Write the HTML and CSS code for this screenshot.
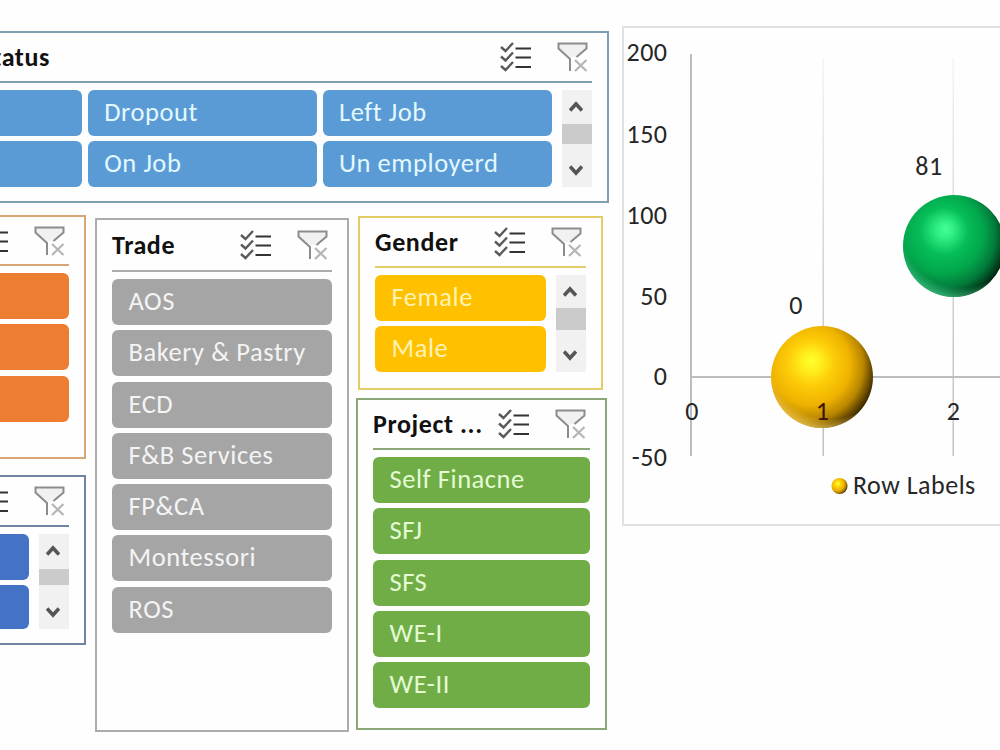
FILE: index.html
```html
<!DOCTYPE html>
<html lang="en">
<head>
  <meta charset="UTF-8" />
  <meta name="viewport" content="width=device-width, initial-scale=1.0">
  <title>Dashboard</title>
  <link rel="stylesheet" href="styles.css">
</head>
<body>
  <!-- shared icons -->
  <svg class="defs" width="0" height="0">
    <symbol id="icon-multi" viewBox="0 0 31 30">
      <path d="M1 5l4.5 4L13 1M1 14.5l4.5 4L13 10.500M1 24l4.500 4L13 20" fill="none" stroke="#5a5a5a" stroke-width="2.4"/>
      <path d="M15.500 6.500H31M15.500 15.500H31M15.500 25H31" stroke="#333" stroke-width="2.200"/>
    </symbol>
    <symbol id="icon-clear" viewBox="0 0 31 31">
      <path d="M1.500 1.500H29.500V6.500L20 15L13 15L1.500 6.500Z" fill="#f1f1f1"/>
      <path d="M13 29V17L1.500 6.500V1.500H29.500V6.500L19.500 15" fill="none" stroke="#8c8c8c" stroke-width="2"/>
      <path d="M18 18L29.500 29M29.500 18L18 29" stroke="#b8b4b4" stroke-width="2.200"/>
    </symbol>
    <symbol id="icon-up" viewBox="0 0 14 11">
      <path d="M1 9.500L7 3L13 9.500" fill="none" stroke="#555" stroke-width="3.600"/>
    </symbol>
    <symbol id="icon-down" viewBox="0 0 14 11">
      <path d="M1 1.500L7 8L13 1.500" fill="none" stroke="#555" stroke-width="3.600"/>
    </symbol>
  </svg>

  <div class="dashboard">
    <div class="slicers">
      <div class="slicer status">
        <div class="slicer-header">
          <h3>Status</h3>
          <svg class="multi"><use href="#icon-multi"/></svg>
          <svg class="clear"><use href="#icon-clear"/></svg>
        </div>
        <div class="slicer-body">
          <div class="items three">
            <button></button>
            <button>Dropout</button>
            <button>Left Job</button>
            <button></button>
            <button>On Job</button>
            <button>Un employerd</button>
          </div>
          <div class="scrollbar">
            <svg><use href="#icon-up"/></svg>
            <div class="thumb"></div>
            <svg><use href="#icon-down"/></svg>
          </div>
        </div>
      </div>

      <div class="columns">
        <div class="column column-left">
          <div class="slicer orange">
            <div class="slicer-header">
              <svg class="multi"><use href="#icon-multi"/></svg>
              <svg class="clear"><use href="#icon-clear"/></svg>
            </div>
            <div class="slicer-body">
              <div class="items">
                <button></button>
                <button></button>
                <button></button>
              </div>
            </div>
          </div>
          <div class="slicer blue">
            <div class="slicer-header">
              <svg class="multi"><use href="#icon-multi"/></svg>
              <svg class="clear"><use href="#icon-clear"/></svg>
            </div>
            <div class="slicer-body">
              <div class="items">
                <button></button>
                <button></button>
              </div>
              <div class="scrollbar">
                <svg><use href="#icon-up"/></svg>
                <div class="thumb"></div>
                <svg><use href="#icon-down"/></svg>
              </div>
            </div>
          </div>
        </div>

        <div class="column column-trade">
          <div class="slicer trade">
            <div class="slicer-header">
              <h3>Trade</h3>
              <svg class="multi"><use href="#icon-multi"/></svg>
              <svg class="clear"><use href="#icon-clear"/></svg>
            </div>
            <div class="slicer-body">
              <div class="items">
                <button>AOS</button>
                <button>Bakery &amp; Pastry</button>
                <button>ECD</button>
                <button>F&amp;B Services</button>
                <button>FP&amp;CA</button>
                <button>Montessori</button>
                <button>ROS</button>
              </div>
            </div>
          </div>
        </div>

        <div class="column column-right">
          <div class="slicer gender">
            <div class="slicer-header">
              <h3>Gender</h3>
              <svg class="multi"><use href="#icon-multi"/></svg>
              <svg class="clear"><use href="#icon-clear"/></svg>
            </div>
            <div class="slicer-body">
              <div class="items">
                <button>Female</button>
                <button>Male</button>
              </div>
              <div class="scrollbar">
                <svg><use href="#icon-up"/></svg>
                <div class="thumb"></div>
                <svg><use href="#icon-down"/></svg>
              </div>
            </div>
          </div>
          <div class="slicer project">
            <div class="slicer-header">
              <h3>Project ...</h3>
              <svg class="multi"><use href="#icon-multi"/></svg>
              <svg class="clear"><use href="#icon-clear"/></svg>
            </div>
            <div class="slicer-body">
              <div class="items">
                <button>Self Finacne</button>
                <button>SFJ</button>
                <button>SFS</button>
                <button>WE-I</button>
                <button>WE-II</button>
              </div>
            </div>
          </div>
        </div>
      </div>
    </div>

    <div class="chart">
      <svg width="440" height="496" viewBox="0 0 440 496">
        <defs>
          <linearGradient id="grid-fade" x1="0" y1="30" x2="0" y2="428" gradientUnits="userSpaceOnUse">
            <stop offset="0" stop-color="#f4f4f4"/>
            <stop offset="0.5" stop-color="#d4d4d6"/>
            <stop offset="1" stop-color="#bfc1c4"/>
          </linearGradient>
          <radialGradient id="gold" cx="0.37" cy="0.4" r="0.66" fx="0.4" fy="0.34">
            <stop offset="0" stop-color="#ffff30"/>
            <stop offset="0.12" stop-color="#fff21e"/>
            <stop offset="0.35" stop-color="#fdcb08"/>
            <stop offset="0.6" stop-color="#eeb200"/>
            <stop offset="0.8" stop-color="#b98600"/>
            <stop offset="1" stop-color="#3a2800"/>
          </radialGradient>
          <radialGradient id="green" cx="0.37" cy="0.4" r="0.66" fx="0.42" fy="0.33">
            <stop offset="0" stop-color="#46ff96"/>
            <stop offset="0.12" stop-color="#30f086"/>
            <stop offset="0.35" stop-color="#06be58"/>
            <stop offset="0.6" stop-color="#02a64c"/>
            <stop offset="0.8" stop-color="#027a3a"/>
            <stop offset="1" stop-color="#002811"/>
          </radialGradient>
          <radialGradient id="gold-rim" cx="0.58" cy="0.32" r="0.7">
            <stop offset="0.84" stop-color="#f7cd50" stop-opacity="0"/>
            <stop offset="1" stop-color="#f7cd50" stop-opacity="0.8"/>
          </radialGradient>
          <radialGradient id="green-rim" cx="0.58" cy="0.32" r="0.7">
            <stop offset="0.84" stop-color="#3fc886" stop-opacity="0"/>
            <stop offset="1" stop-color="#3fc886" stop-opacity="0.8"/>
          </radialGradient>
        </defs>

        <!-- axes and gridlines -->
        <rect x="198.500" y="30" width="1.500" height="398" fill="url(#grid-fade)"/>
        <rect x="328.500" y="30" width="1.500" height="398" fill="url(#grid-fade)"/>
        <path class="axis" d="M67 26V428M67 349H440"/>

        <!-- bubbles -->
        <circle cx="198" cy="349" r="51" fill="url(#gold)"/>
        <circle cx="198" cy="349" r="51" fill="url(#gold-rim)"/>
        <circle cx="330" cy="218" r="51" fill="url(#green)"/>
        <circle cx="330" cy="218" r="51" fill="url(#green-rim)"/>

        <g class="y-labels">
          <text x="43.500" y="33">200</text>
          <text x="43.500" y="115">150</text>
          <text x="43.500" y="196">100</text>
          <text x="43.500" y="277">50</text>
          <text x="43.500" y="357">0</text>
          <text x="43.500" y="438">-50</text>
        </g>
        <g class="x-labels">
          <text x="68" y="392">0</text>
          <text class="over" x="198.500" y="392">1</text>
          <text x="329.500" y="392">2</text>
          <text x="172" y="286">0</text>
          <text x="305" y="147">81</text>
        </g>

        <!-- legend -->
        <circle cx="215.500" cy="458" r="8" fill="url(#gold)"/>
        <text x="229" y="466">Row Labels</text>
      </svg>
    </div>
  </div>
</body>
</html>
```
FILE: styles.css
```css
* {
  box-sizing: border-box;
}
body {
  margin: 0;
  background: #fefefe;
  font-family: Carlito, Lato, "Liberation Sans", sans-serif;
  overflow: hidden;
}
.defs {
  display: block;
}
.dashboard {
  display: flex;
  align-items: flex-start;
  width: 1000px;
  height: 750px;
  overflow: hidden;
}
.slicers {
  width: 609px;
  flex-shrink: 0;
  padding-top: 31px;
}
.slicer {
  border: 2px solid var(--line);
  padding: 0 15px;
}
.slicer-header {
  display: flex;
  align-items: flex-start;
  height: 50px;
  padding: 9px 4px 0 0;
  border-bottom: 2px solid var(--line);
}
.slicer-header h3 {
  margin: 1px 0 0;
  font-size: 26px;
  letter-spacing: 0.6px;
  line-height: 28px;
  color: #111;
  white-space: nowrap;
}
.multi {
  width: 31px;
  height: 30px;
  margin-left: auto;
  flex-shrink: 0;
}
.clear {
  width: 31px;
  height: 31px;
  margin-left: 26px;
  flex-shrink: 0;
}
.slicer-body {
  display: flex;
  justify-content: space-between;
  margin-top: 7px;
}
.items {
  display: grid;
  gap: 5.3px;
  flex: 1;
}
.items.three {
  grid-template-columns: repeat(3, 1fr);
}
.items button {
  height: 46px;
  padding: 0 0 2px 16.5px;
  border: none;
  border-radius: 6px;
  background: var(--fill);
  color: var(--text);
  font-family: inherit;
  font-size: 26.5px;
  letter-spacing: 0.55px;
  text-align: left;
  white-space: nowrap;
}
.scrollbar {
  display: flex;
  flex-direction: column;
  align-items: center;
  justify-content: space-between;
  width: 30px;
  margin-left: 10px;
  padding: 11px 0;
  background: #f1f1f1;
}
.scrollbar svg {
  width: 14px;
  height: 11px;
  margin-right: 3px;
}
.thumb {
  width: 100%;
  height: 20px;
  margin-bottom: 9px;
  background: #cbcbcb;
}
.status {
  --line: #7d9fb0;
  --fill: #5b9bd5;
  --text: #e2f8ff;
  height: 172px;
  margin-left: -164px;
}
.status h3 {
  width: 197px;
  text-align: right;
}
.columns {
  display: flex;
  align-items: flex-start;
}
.column-left {
  width: 236px;
  margin: 12px 9px 0 -150px;
  flex-shrink: 0;
}
.column-trade {
  width: 254px;
  margin: 15px 7px 0 0;
  flex-shrink: 0;
}
.column-right {
  width: 251px;
  margin-top: 13px;
  flex-shrink: 0;
}
.orange {
  --line: #d9a577;
  --fill: #ed7d31;
  height: 244px;
}
.orange .slicer-header {
  height: 49px;
}
.blue {
  --line: #7284a3;
  --fill: #4472c4;
  height: 170px;
  margin-top: 16px;
}
.blue .thumb {
  height: 16px;
}
.blue .items button:last-child {
  height: 44px;
}
.trade {
  --line: #acacac;
  --fill: #a5a5a5;
  --text: #f4f4f4;
  height: 514px;
}
.trade .slicer-header {
  height: 52px;
  padding-top: 10px;
}
.gender {
  --line: #e3cb68;
  --fill: #ffc000;
  --text: #fff3b0;
  height: 174px;
  margin: 0 4px 0 2px;
}
.gender .thumb {
  height: 22px;
}
.project {
  --line: #8ca878;
  --fill: #70ad47;
  --text: #e4fbd3;
  height: 332px;
  margin-top: 8px;
}
.chart {
  width: 444px;
  height: 500px;
  margin: 26px 0 0 13px;
  border: 2px solid #e0e1e2;
  flex-shrink: 0;
}
.chart svg {
  display: block;
}
.chart text {
  font-size: 26px;
  letter-spacing: 0.5px;
  fill: #262626;
}
.chart .over {
  fill: #3d1408;
}
.axis {
  fill: none;
  stroke: #bcbdbf;
  stroke-width: 2;
}
.y-labels {
  text-anchor: end;
}
.x-labels {
  text-anchor: middle;
}
```
